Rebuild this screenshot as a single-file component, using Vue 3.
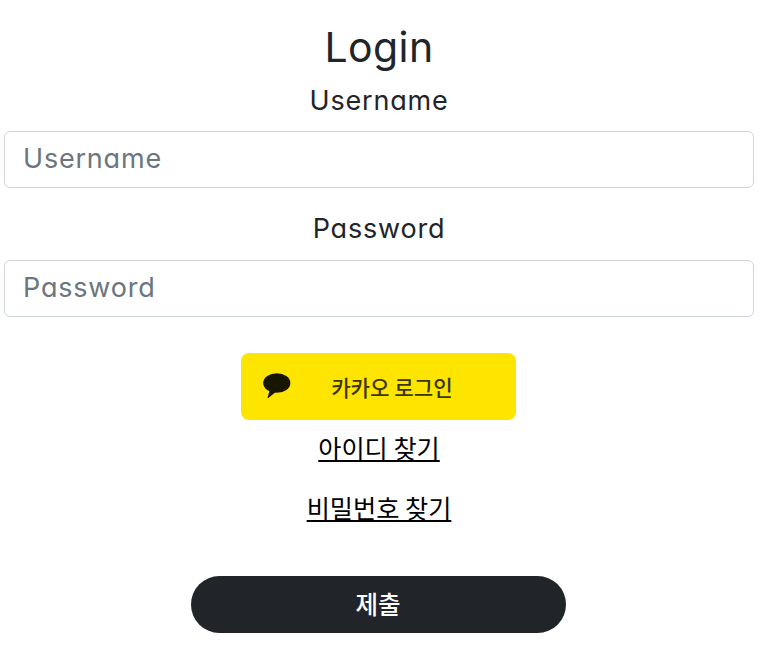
<script setup>
import { ref } from 'vue'

const username = ref('')
const password = ref('')
</script>

<template>
  <div class="login-page">
    <h1 class="title">Login</h1>
    <form class="login-form" @submit.prevent>
      <label class="field-label" for="username">Username</label>
      <input id="username" v-model="username" class="field-input" type="text" placeholder="Username" />

      <label class="field-label second" for="password">Password</label>
      <input id="password" v-model="password" class="field-input" type="password" placeholder="Password" />

      <button class="kakao-btn" type="button">
        <svg class="kakao-icon" viewBox="0 0 28 26" width="28" height="26">
          <ellipse cx="13.800" cy="10" rx="13.600" ry="9.800" fill="#191600" />
          <path d="M7 16L4.600 24.600c-.1.500.3.700.7.400L14 18z" fill="#191600" />
        </svg>
        <span class="kakao-text">카카오 로그인</span>
      </button>

      <a class="find-link" href="#">아이디 찾기</a>
      <a class="find-link pw" href="#">비밀번호 찾기</a>

      <button class="submit-btn" type="submit">제출</button>
    </form>
  </div>
</template>

<style scoped>
.login-page {
  width: 760px;
  height: 653px;
  box-sizing: border-box;
  padding: 0 6px 0 4px;
  background: #fff;
  color: #212529;
  font-family: Inter, "Noto Sans CJK KR", sans-serif;
  font-feature-settings: "cv11";
  overflow: hidden;
}

.title {
  margin: 0;
  padding-top: 23px;
  height: 48px;
  line-height: 48px;
  font-size: 41px;
  font-weight: 400;
  letter-spacing: 0.4px;
  text-align: center;
}

.login-form {
  display: flex;
  flex-direction: column;
  align-items: center;
}

.field-label {
  margin-top: 10px;
  height: 50px;
  line-height: 40px;
  font-size: 27px;
  letter-spacing: 0.8px;
}

.field-label.second {
  margin-top: 22px;
  height: 50px;
  line-height: 38px;
}

.field-input {
  width: 100%;
  height: 57px;
  box-sizing: border-box;
  padding: 0 18px 3px;
  border: 1px solid #ced4da;
  border-radius: 6px;
  background: #fff;
  color: #212529;
  font-family: inherit;
  font-feature-settings: inherit;
  font-size: 27px;
  letter-spacing: 0.8px;
  outline: none;
}

.field-input::placeholder {
  color: #6c757d;
  opacity: 1;
}

.kakao-btn {
  display: flex;
  align-items: center;
  width: 275px;
  height: 67px;
  margin-top: 36px;
  margin-right: 2px;
  padding: 0 0 0 22px;
  border: none;
  border-radius: 8px;
  background: #fee500;
  font-family: inherit;
}

.kakao-icon {
  flex: none;
  margin-top: -1px;
}

.kakao-text {
  flex: 1;
  padding-right: 22px;
  color: #3a3500;
  font-family: "Noto Sans CJK KR", sans-serif;
  font-size: 21.2px;
  font-weight: 500;
  text-align: center;
}

.find-link {
  margin-top: 9px;
  color: #000;
  font-family: "Noto Sans CJK KR", sans-serif;
  font-size: 25.2px;
  line-height: 36px;
  text-decoration: underline;
}

.find-link.pw {
  margin-top: 24px;
}

.submit-btn {
  width: 375px;
  height: 57px;
  margin-top: 51px;
  margin-right: 2px;
  padding: 0 0 3px;
  border: none;
  border-radius: 29px;
  background: #212529;
  color: #fff;
  font-family: "Noto Sans CJK KR", sans-serif;
  font-size: 24.5px;
  font-weight: 500;
}
</style>

<style>
html, body {
  margin: 0;
  background: #fff;
}
</style>
